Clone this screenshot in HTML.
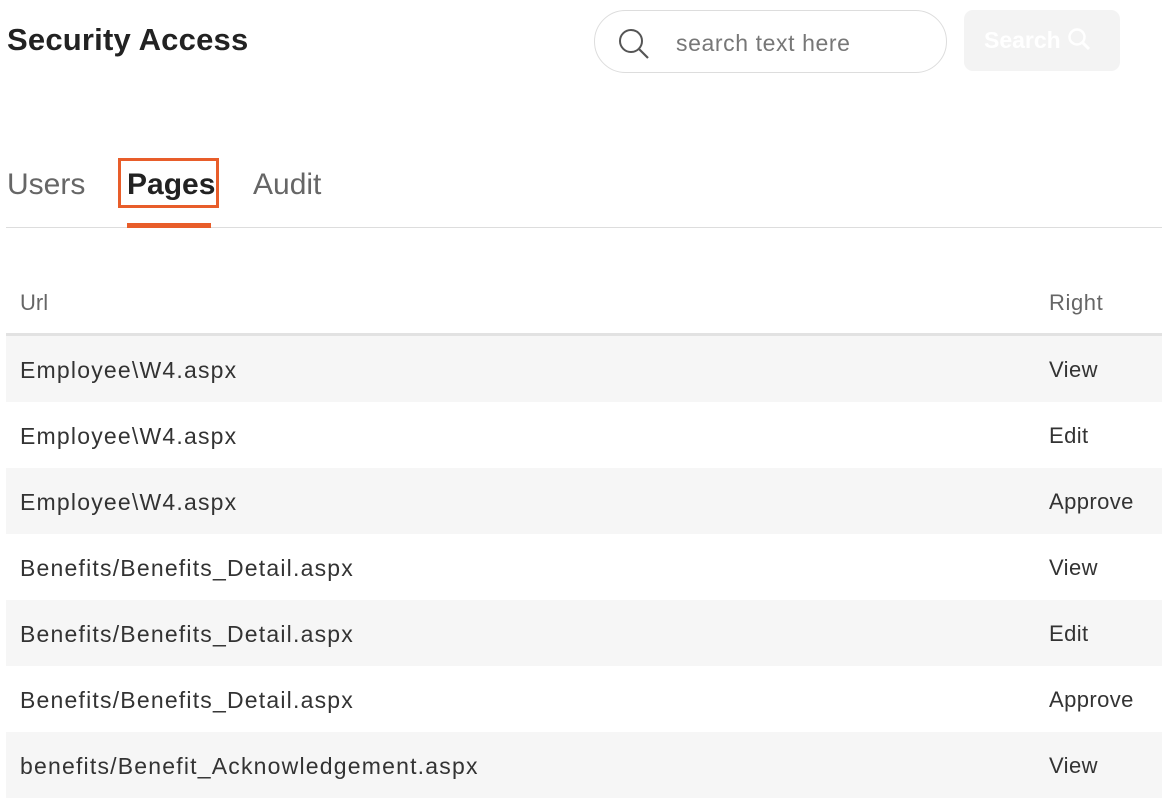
<!DOCTYPE html>
<html><head><style>
body{margin:0;width:1162px;height:798px;overflow:hidden;background:#fff;font-family:"Liberation Sans",sans-serif;position:relative}
.a{position:absolute}
h1{position:absolute;left:7px;top:22px;margin:0;font-size:31px;font-weight:bold;color:#222;letter-spacing:0.2px}
.pill{left:594px;top:10px;width:353px;height:63px;border:1px solid #ddd;border-radius:32px;box-sizing:border-box}
.btn{left:964px;top:10px;width:156px;height:61px;background:#f3f3f3;border-radius:9px;color:#fff;font-size:23px;font-weight:bold;line-height:61px;text-indent:20px}
.tab{top:168px;font-size:30px;color:#666}
.row{left:6px;width:1156px;height:66px;font-size:23px;color:#333;line-height:68px;letter-spacing:1.2px}
.row span{position:absolute;left:14px}.row b{position:absolute;left:1043px;font-weight:normal;letter-spacing:0.4px;font-size:22px}
.g{background:#f6f6f6}
</style></head><body>
<h1>Security Access</h1>
<div class="a pill"></div>
<svg class="a" style="left:617px;top:27px" width="34" height="34" viewBox="0 0 34 34"><circle cx="14" cy="14" r="11" fill="none" stroke="#555" stroke-width="2"/><line x1="22" y1="22" x2="31" y2="31" stroke="#555" stroke-width="2.2"/></svg>
<div class="a" style="left:676px;top:30px;font-size:23px;color:#777;letter-spacing:0.6px">search text here</div>
<div class="a btn">Search <svg width="24" height="24" viewBox="0 0 24 24" style="vertical-align:-3px;margin-left:0px"><circle cx="10" cy="10" r="7.5" fill="none" stroke="#fff" stroke-width="2.5"/><line x1="15.5" y1="15.5" x2="22" y2="22" stroke="#fff" stroke-width="3"/></svg></div>
<div class="a tab" style="left:7px">Users</div>
<div class="a tab" style="left:127px;color:#222;font-weight:bold">Pages</div>
<div class="a" style="left:118px;top:158px;width:101px;height:50px;border:3px solid #e85d2a;box-sizing:border-box"></div>
<div class="a tab" style="left:253px">Audit</div>
<div class="a" style="left:6px;top:227px;width:1156px;height:1px;background:#ddd"></div>
<div class="a" style="left:127px;top:223px;width:84px;height:5px;background:#e85d2a"></div>
<div class="a" style="left:20px;top:290px;font-size:22px;color:#666">Url</div>
<div class="a" style="left:1049px;top:290px;font-size:22px;color:#666;letter-spacing:0.6px">Right</div>
<div class="a" style="left:6px;top:333px;width:1156px;height:3px;background:#e2e2e2"></div>
<div class="a row g" style="top:336px"><span>Employee\W4.aspx</span><b>View</b></div>
<div class="a row" style="top:402px"><span>Employee\W4.aspx</span><b>Edit</b></div>
<div class="a row g" style="top:468px"><span>Employee\W4.aspx</span><b>Approve</b></div>
<div class="a row" style="top:534px"><span>Benefits/Benefits_Detail.aspx</span><b>View</b></div>
<div class="a row g" style="top:600px"><span>Benefits/Benefits_Detail.aspx</span><b>Edit</b></div>
<div class="a row" style="top:666px"><span>Benefits/Benefits_Detail.aspx</span><b>Approve</b></div>
<div class="a row g" style="top:732px"><span>benefits/Benefit_Acknowledgement.aspx</span><b>View</b></div>
</body></html>
